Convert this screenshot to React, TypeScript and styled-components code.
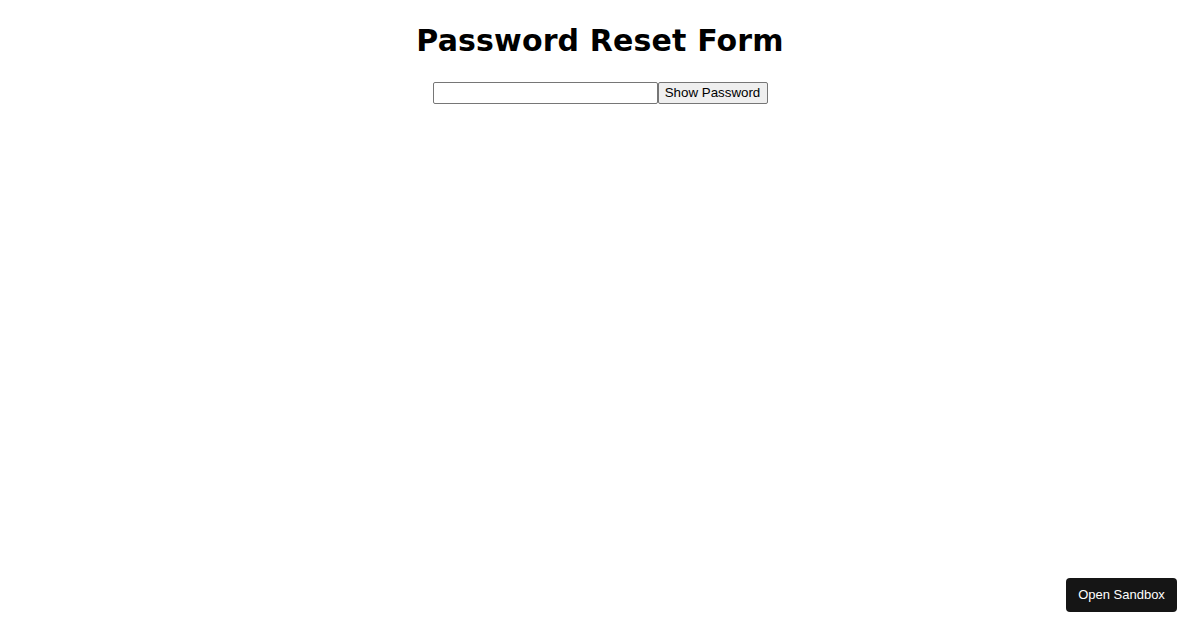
import React from "react";
import styled, { createGlobalStyle } from "styled-components";

const Global = createGlobalStyle`
  html, body { margin: 0; padding: 0; background: #fff; }
  body { font-family: "Liberation Sans", Arial, sans-serif; }
`;

const Page = styled.div`
  min-height: 630px;
  padding: 8px;
  box-sizing: border-box;
  display: flex;
  flex-direction: column;
  align-items: center;
`;

const Title = styled.h1`
  font-family: "DejaVu Sans", "Noto Sans", sans-serif;
  font-weight: 700;
  font-size: 30px;
  letter-spacing: 0.15px;
  line-height: 38px;
  margin: 14px 0 22px;
  color: #000;
`;

const Row = styled.div`
  display: flex;
  align-items: stretch;
`;

const Field = styled.input`
  width: 225px;
  height: 22px;
  box-sizing: border-box;
  border: 1px solid #767676;
  border-radius: 2px;
  padding: 1px 2px;
  font-family: "Liberation Sans", Arial, sans-serif;
  font-size: 13.33px;
  background: #fff;
`;

const Toggle = styled.button`
  width: 110px;
  height: 22px;
  box-sizing: border-box;
  border: 1px solid #767676;
  border-radius: 2px;
  background: #efefef;
  padding: 0 6px 2px;
  font-family: "Liberation Sans", Arial, sans-serif;
  font-size: 13.33px;
  color: #000;
`;

const SandboxButton = styled.button`
  position: fixed;
  right: 23px;
  bottom: 18px;
  width: 111px;
  height: 34px;
  border: none;
  border-radius: 4px;
  background: #151515;
  color: #fff;
  padding: 0 0 2px;
  font-family: "Liberation Sans", Arial, sans-serif;
  font-size: 13px;
`;

export default function App() {
  return (
    <>
      <Global />
      <Page>
        <Title>Password Reset Form</Title>
        <Row>
          <Field type="password" />
          <Toggle>Show Password</Toggle>
        </Row>
      </Page>
      <SandboxButton>Open Sandbox</SandboxButton>
    </>
  );
}
